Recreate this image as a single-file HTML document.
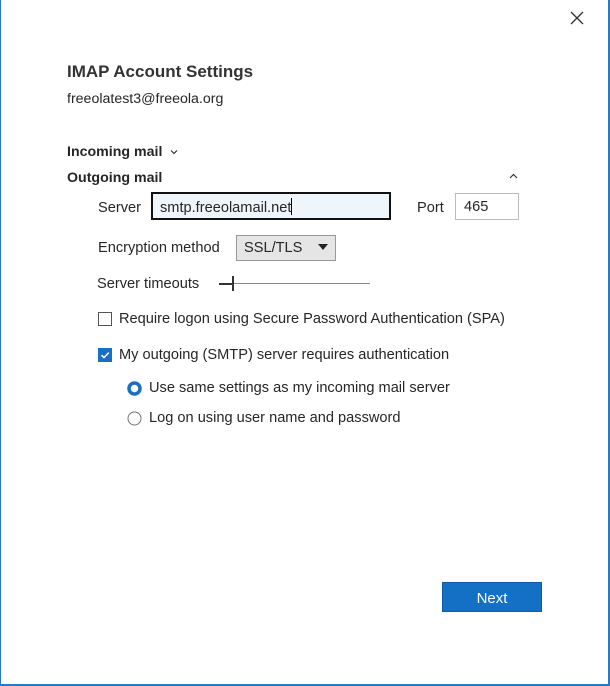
<!DOCTYPE html>
<html><head><meta charset="utf-8"><style>
*{margin:0;padding:0;box-sizing:border-box}
body{width:610px;height:686px;background:#fff;position:relative;overflow:hidden;font-family:"Liberation Sans",sans-serif;color:#262626;font-size:14.6px}
.frame{position:absolute;left:0;top:0;width:610px;height:686px;border-left:1px solid #2b79c2;border-right:2px solid #2b79c2;border-bottom:2px solid #2b79c2}
.a{position:absolute;white-space:nowrap}
.cb{position:absolute;width:14px;height:14px;border:1px solid #555;background:#fff}
</style></head><body>
<div class="frame"></div>
<svg class="a" style="left:570px;top:11px" width="14" height="14"><path d="M1 1L13 13M13 1L1 13" stroke="#333" stroke-width="1.3"/></svg>
<div class="a" style="left:67px;top:62px;font-size:17px;font-weight:bold;color:#333">IMAP Account Settings</div>
<div class="a" style="left:67px;top:91px;font-size:14.2px">freeolatest3@freeola.org</div>
<div class="a" style="left:67px;top:144px;font-weight:bold;font-size:14.2px">Incoming mail</div>
<svg class="a" style="left:170px;top:149px" width="8" height="6"><path d="M1 1.5L4 4.5L7 1.5" stroke="#333" fill="none" stroke-width="1.2"/></svg>
<div class="a" style="left:67px;top:170px;font-weight:bold;font-size:14.2px">Outgoing mail</div>
<svg class="a" style="left:509px;top:173px" width="9" height="6"><path d="M1 5L4.5 1.5L8 5" stroke="#333" fill="none" stroke-width="1.2"/></svg>
<div class="a" style="left:98px;top:200px">Server</div>
<div class="a" style="left:151px;top:192px;width:240px;height:28px;border:2px solid #111;background:#eef5fb;padding:4px 0 0 7px">smtp.freeolamail.net<span style="display:inline-block;width:1px;height:17px;background:#000;vertical-align:-3px"></span></div>
<div class="a" style="left:417px;top:200px">Port</div>
<div class="a" style="left:455px;top:193px;width:64px;height:27px;border:1px solid #bbb;padding:5px 0 0 8px">465</div>
<div class="a" style="left:98px;top:240px">Encryption method</div>
<div class="a" style="left:236px;top:235px;width:100px;height:26px;border:1px solid #999;background:#e5e5e5;padding:4px 0 0 7px">SSL/TLS</div>
<svg class="a" style="left:318px;top:244px" width="10" height="6"><path d="M0 0H10L5 6Z" fill="#222"/></svg>
<div class="a" style="left:97px;top:276px">Server timeouts</div>
<div class="a" style="left:220px;top:283px;width:150px;height:1px;background:#888"></div>
<div class="a" style="left:219px;top:283px;width:14px;height:2px;background:#333"></div>
<div class="a" style="left:232px;top:276px;width:2px;height:15px;background:#333"></div>
<div class="cb" style="left:98px;top:312px"></div>
<div class="a" style="left:119px;top:311px">Require logon using Secure Password Authentication (SPA)</div>
<div class="cb" style="left:98px;top:348px;background:#1a6fc4;border-color:#1a6fc4"></div>
<svg class="a" style="left:98px;top:348px" width="14" height="14"><path d="M3.5 7.2L6 9.6L10.8 4.6" stroke="#fff" fill="none" stroke-width="1.5"/></svg>
<div class="a" style="left:119px;top:347px">My outgoing (SMTP) server requires authentication</div>
<svg class="a" style="left:127px;top:381px" width="15" height="15"><circle cx="7.5" cy="7.5" r="5.5" fill="#fff" stroke="#1a6fc4" stroke-width="3.5"/></svg>
<div class="a" style="left:149px;top:380px">Use same settings as my incoming mail server</div>
<svg class="a" style="left:127px;top:411px" width="15" height="15"><circle cx="7.5" cy="7.5" r="6.5" fill="#fff" stroke="#777" stroke-width="1"/></svg>
<div class="a" style="left:149px;top:410px">Log on using user name and password</div>
<div class="a" style="left:442px;top:582px;width:100px;height:30px;background:#1470c4;border:1px solid #0e5ca8;color:#fff;text-align:center;line-height:31px;font-size:15px">Next</div>
</body></html>
